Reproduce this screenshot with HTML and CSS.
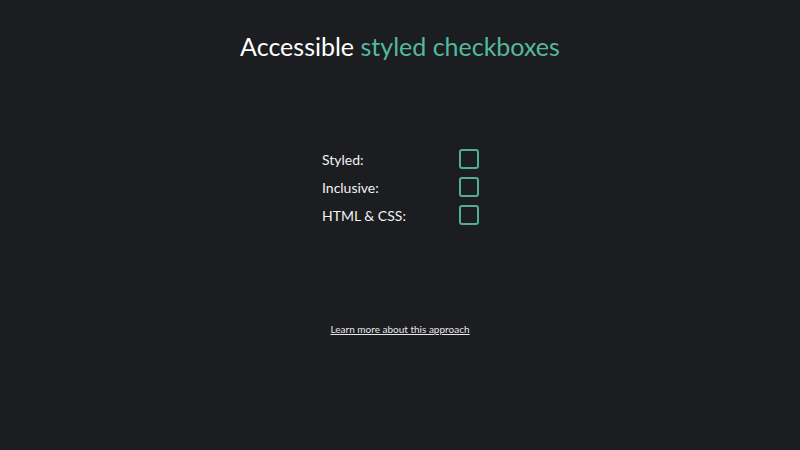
FILE: index.html
```html
<!DOCTYPE html>
<html lang="en">
<head>
<meta charset="utf-8">
<title>Accessible styled checkboxes</title>
<link rel="stylesheet" href="styles.css">
</head>
<body>
<main class="page">
  <h1 class="title">Accessible <span class="accent">styled checkboxes</span></h1>
  <form class="options">
    <label class="row"><span class="row-label">Styled:</span><input type="checkbox" class="box"></label>
    <label class="row"><span class="row-label">Inclusive:</span><input type="checkbox" class="box"></label>
    <label class="row"><span class="row-label">HTML &amp; CSS:</span><input type="checkbox" class="box"></label>
  </form>
  <a class="more" href="#">Learn more about this approach</a>
</main>
</body>
</html>
```
FILE: styles.css
```css
html, body {
  margin: 0;
  height: 100%;
  background: #1c1d20;
}

.page {
  display: flex;
  flex-direction: column;
  align-items: center;
  font-family: Lato, "Open Sans", sans-serif;
  color: #f2f2f2;
}

.title {
  margin: 30px 0 0;
  font-family: Lato, "Open Sans", sans-serif;
  font-weight: 400;
  font-size: 25px;
  line-height: 32px;
  color: #ffffff;
}

.accent {
  color: #52b99c;
}

.options {
  margin-top: 87px;
  display: flex;
  flex-direction: column;
  gap: 8px;
  width: 157px;
  margin-left: 1px;
}

.row {
  display: flex;
  align-items: center;
  justify-content: space-between;
  height: 20px;
  font-size: 14px;
}

.box {
  appearance: none;
  margin: 0;
  width: 20px;
  height: 20px;
  box-sizing: border-box;
  border: 2px solid #4fae93;
  border-radius: 3px;
  background: transparent;
}

.more {
  margin-top: 98px;
  font-size: 10px;
  color: #e8e8e8;
  text-decoration: underline;
}
```
